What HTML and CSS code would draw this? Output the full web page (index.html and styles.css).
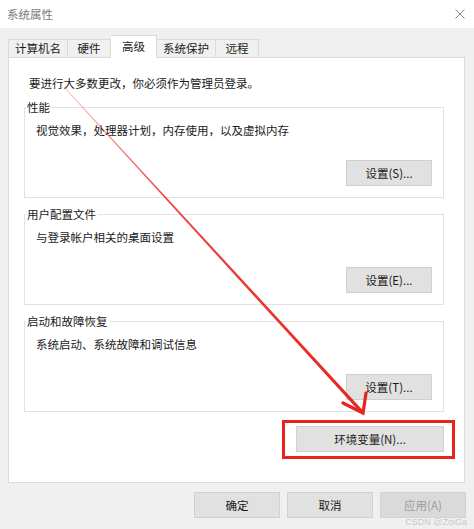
FILE: index.html
```html
<!DOCTYPE html>
<html lang="zh-CN">
<head>
    <meta charset="UTF-8">
    <meta name="viewport" content="width=device-width, initial-scale=1.0">
    <title>系统属性</title>
    <link rel="stylesheet" href="styles.css">
</head>
<body>
    <div class="titlebar">
        <span class="title">系统属性</span>
        <svg class="close" width="10" height="10" viewBox="0 0 10 10">
            <path d="M0.5 0.5 L9.5 9.5 M9.5 0.5 L0.5 9.5" stroke="#8a8a8a" stroke-width="1" fill="none"/>
        </svg>
    </div>

    <div class="dialog">
        <div class="tabs">
            <div class="tab">计算机名</div>
            <div class="tab">硬件</div>
            <div class="tab active">高级</div>
            <div class="tab">系统保护</div>
            <div class="tab">远程</div>
        </div>

        <div class="panel">
            <p class="intro">要进行大多数更改，你必须作为管理员登录。</p>

            <fieldset class="group">
                <legend>性能</legend>
                <p class="group-text">视觉效果，处理器计划，内存使用，以及虚拟内存</p>
                <div class="group-actions">
                    <button class="btn">设置(S)...</button>
                </div>
            </fieldset>

            <fieldset class="group">
                <legend>用户配置文件</legend>
                <p class="group-text">与登录帐户相关的桌面设置</p>
                <div class="group-actions">
                    <button class="btn">设置(E)...</button>
                </div>
            </fieldset>

            <fieldset class="group">
                <legend>启动和故障恢复</legend>
                <p class="group-text">系统启动、系统故障和调试信息</p>
                <div class="group-actions">
                    <button class="btn">设置(T)...</button>
                </div>
            </fieldset>

            <div class="panel-actions">
                <button class="btn btn-wide">环境变量(N)...</button>
            </div>
        </div>

        <div class="dialog-actions">
            <button class="btn">确定</button>
            <button class="btn">取消</button>
            <button class="btn" disabled>应用(A)</button>
        </div>
    </div>

    <!-- red annotation drawn over the dialog -->
    <svg class="annotation" width="474" height="529" viewBox="0 0 474 529">
        <defs>
            <linearGradient id="fade" gradientUnits="userSpaceOnUse" x1="64" y1="87" x2="363" y2="413">
                <stop offset="0" stop-color="#e8231c" stop-opacity="0.3"/>
                <stop offset="0.35" stop-color="#e8231c" stop-opacity="0.85"/>
                <stop offset="1" stop-color="#e8231c" stop-opacity="1"/>
            </linearGradient>
        </defs>
        <polygon points="64.3,86.7 364.3,411.9 361.7,414.1 63.7,87.3" fill="url(#fade)"/>
        <polyline points="343,403 363,413 366,393" fill="none" stroke="#e8231c" stroke-width="3.2" stroke-linecap="round"/>
        <rect x="283.5" y="421.5" width="170" height="36" fill="none" stroke="#e8231c" stroke-width="3"/>
    </svg>

    <div class="watermark">CSDN @ZoiGa</div>
</body>
</html>
```

FILE: styles.css
```css
* {
    box-sizing: border-box;
}

body {
    margin: 0;
    background: #f0f0f0;
    color: #1a1a1a;
    font-family: "Noto Sans CJK SC", "Noto Sans", sans-serif;
    font-size: 11.5px;
    line-height: 16px;
    overflow: hidden;
}

.titlebar {
    height: 28px;
    background: #fff;
    display: flex;
    align-items: center;
    justify-content: space-between;
    padding: 0 9px 0 7px;
}

.title {
    color: #7a7a7a;
}

.close {
    display: block;
}

.dialog {
    padding: 7px 8px 0 8px;
}

.tabs {
    display: flex;
    align-items: flex-end;
    height: 22px;
}

.tab {
    height: 18px;
    min-width: 43px;
    padding: 0 6px;
    border: 1px solid #d9d9d9;
    border-bottom: none;
    border-left-width: 0;
    background: #f0f0f0;
    text-align: center;
    line-height: 17px;
    white-space: nowrap;
}

.tab:first-child {
    border-left-width: 1px;
}

.tab.active {
    height: 23px;
    min-width: 46px;
    margin-bottom: -1px;
    background: #fff;
    line-height: 21px;
    position: relative;
    z-index: 1;
}

.panel {
    background: #fff;
    border: 1px solid #dadada;
    margin-right: 1px;
    padding: 17px 20px 30px 15px;
}

.intro {
    margin: 0 0 8px 5px;
}

.group {
    margin: 0;
    min-width: 0;
    border: 1px solid #e2e2e2;
    padding: 0 11px 11px 11px;
}

.group + .group {
    margin-top: 8px;
}

.group legend {
    padding: 0 2px 0 1px;
    margin-left: -10px;
    line-height: 16px;
}

.group-text {
    margin: 7px 0 0;
}

.group-actions,
.panel-actions,
.dialog-actions {
    display: flex;
    justify-content: flex-end;
}

.group-actions {
    margin-top: 22px;
}

.panel-actions {
    margin-top: 14px;
}

.dialog-actions {
    margin-top: 9px;
    gap: 7px;
}

.btn {
    width: 86px;
    height: 26px;
    padding: 0;
    background: #e1e1e1;
    border: 1px solid #d0d0d0;
    color: #1a1a1a;
    font-family: inherit;
    font-size: 11.5px;
    line-height: 16px;
}

.btn-wide {
    width: 148px;
}

.btn:disabled {
    background: #dadada;
    border-color: #d2d2d2;
    color: #9c9c9c;
}

.annotation {
    position: absolute;
    top: 0;
    left: 0;
    pointer-events: none;
}

.watermark {
    position: absolute;
    right: 7px;
    bottom: 2px;
    font-family: "Liberation Sans", sans-serif;
    font-size: 9px;
    line-height: 10px;
    color: rgba(170, 170, 170, 0.6);
}
```
